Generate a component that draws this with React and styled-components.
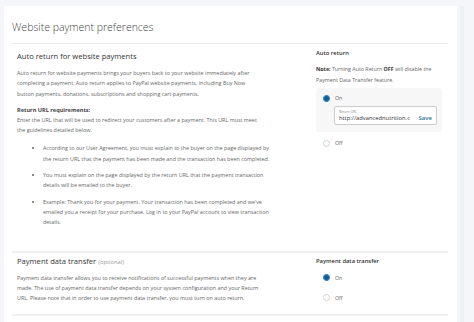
import React from 'react';
import styled, { createGlobalStyle } from 'styled-components';

const Global = createGlobalStyle`
  html, body {
    margin: 0;
    padding: 0;
    background: #f5f6f9;
    font-family: "Open Sans", "Noto Sans", sans-serif;
    color: #555;
  }
`;

const Page = styled.div`
  display: flex;
  height: 322px;
  padding: 6px 0 0 4px;
  box-sizing: border-box;
  overflow: hidden;
`;

const Card = styled.div`
  width: 453px;
  background: #fff;
  padding: 14px 9px 0 8px;
  box-sizing: border-box;
  flex-shrink: 0;
`;

const Rail = styled.div`
  width: 4px;
  margin-left: 3px;
  background: #eef0f4;
`;

const Title = styled.h1`
  margin: 0;
  font-size: 10.5px;
  font-weight: 300;
  color: #444;
  padding-bottom: 9px;
  border-bottom: 1px solid #ebebeb;
`;

const Section = styled.section`
  display: grid;
  grid-template-columns: 245px 1fr;
  column-gap: 54px;
  padding: ${p => p.pad || '10px 5px 14px'};
  border-bottom: 2px solid #f0f0f0;
`;

const Heading = styled.h2`
  margin: 0 0 7px;
  font-size: 7.6px;
  font-weight: 500;
  color: #333;
`;

const Optional = styled.span`
  font-size: 5.8px;
  font-weight: 400;
  color: #999;
`;

const Text = styled.p`
  margin: 0 0 ${p => p.mb ?? 7}px;
  font-size: 5.4px;
  line-height: 10.3px;
  color: #666;
`;

const Bold = styled.p`
  margin: 0 0 1px;
  font-size: 5.6px;
  font-weight: 700;
  color: #444;
`;

const List = styled.ul`
  margin: 8px -10px 0 0;
  padding-left: 26px;
  font-size: 5.4px;
  line-height: 10.3px;
  color: #666;
  li { margin-bottom: 6px; }
`;

const Side = styled.div`
  margin-top: ${p => p.top || 0}px;
`;

const SideHeading = styled.h3`
  margin: 0 0 ${p => p.mb || 7}px;
  font-size: 5.8px;
  font-weight: 600;
  color: #333;
`;

const Note = styled.p`
  margin: 0 0 3px;
  font-size: 5.3px;
  line-height: 10.5px;
  color: #666;
`;

const Strong = styled.strong`
  color: #333;
  line-height: inherit;
`;

const OnBox = styled.div`
  background: #f7f7f7;
  border-radius: 3px;
  padding: 6px 5px 7px 6px;
  width: 126px;
  box-sizing: border-box;
`;

const RadioRow = styled.label`
  display: flex;
  align-items: center;
  gap: 5px;
  font-size: 5.3px;
  color: #666;
  margin: ${p => p.m || '0'};
  padding-left: ${p => p.pl || 0}px;
`;

const Dot = styled.span`
  width: 7px;
  height: 7px;
  border-radius: 50%;
  box-sizing: border-box;
  border: 1px solid ${p => (p.on ? '#0b5f9e' : '#cfcfcf')};
  background: ${p => (p.on ? 'radial-gradient(circle, #0b5f9e 0 2.2px, #fff 2.5px)' : '#fff')};
`;

const UrlField = styled.div`
  display: flex;
  align-items: flex-end;
  justify-content: space-between;
  margin: 4px 0 0 12px;
  background: #fff;
  border: 1px solid #ccc;
  border-radius: 2px;
  padding: 2px 4px 2px 4px;
`;

const UrlInner = styled.div`
  display: flex;
  flex-direction: column;
  overflow: hidden;
`;

const UrlLabel = styled.span`
  font-size: 3.4px;
  color: #888;
  line-height: 5px;
`;

const UrlValue = styled.span`
  font-size: 5.8px;
  color: #333;
  line-height: 8px;
  white-space: nowrap;
  width: 72px;
  overflow: hidden;
`;

const Save = styled.span`
  font-size: 6px;
  font-weight: 600;
  color: #1d6f9a;
  line-height: 8px;
`;

export default function App() {
  return (
    <>
      <Global />
      <Page>
        <Card>
          <Title>Website payment preferences</Title>
          <Section pad="7px 5px 17px">
            <div>
              <Heading>Auto return for website payments</Heading>
              <Text>
                Auto return for website payments brings your buyers back to your website immediately after
                completing a payment. Auto return applies to PayPal website payments, including Buy Now
                button payments, donations, subscriptions and shopping cart payments.
              </Text>
              <Bold>Return URL requirements:</Bold>
              <Text mb={0}>
                Enter the URL that will be used to redirect your customers after a payment. This URL must meet
                the guidelines detailed below.
              </Text>
              <List>
                <li>
                  According to our User Agreement, you must explain to the buyer on the page displayed by
                  the return URL that the payment has been made and the transaction has been completed.
                </li>
                <li>
                  You must explain on the page displayed by the return URL that the payment transaction
                  details will be emailed to the buyer.
                </li>
                <li>
                  Example: Thank you for your payment. Your transaction has been completed and we've
                  emailed you a receipt for your purchase. Log in to your PayPal account to view transaction
                  details.
                </li>
              </List>
            </div>
            <Side top={-2}>
              <SideHeading>Auto return</SideHeading>
              <Note>
                <Strong>Note:</Strong> Turning Auto Return <Strong>OFF</Strong> will disable the Payment Data
                Transfer feature.
              </Note>
              <OnBox>
                <RadioRow pl={1}>
                  <Dot on /> On
                </RadioRow>
                <UrlField>
                  <UrlInner>
                    <UrlLabel>Return URL</UrlLabel>
                    <UrlValue>http://advancednutrition.c</UrlValue>
                  </UrlInner>
                  <Save>Save</Save>
                </UrlField>
              </OnBox>
              <RadioRow pl={7} m="7px 0 0">
                <Dot /> Off
              </RadioRow>
            </Side>
          </Section>
          <Section pad="3px 5px 11px">
            <div>
              <Heading>
                Payment data transfer <Optional>(optional)</Optional>
              </Heading>
              <Text mb={0}>
                Payment data transfer allows you to receive notifications of successful payments when they are
                made. The use of payment data transfer depends on your system configuration and your Return
                URL. Please note that in order to use payment data transfer, you must turn on auto return.
              </Text>
            </div>
            <Side top={1}>
              <SideHeading mb={9}>Payment data transfer</SideHeading>
              <RadioRow pl={7}>
                <Dot on /> On
              </RadioRow>
              <RadioRow pl={7} m="12px 0 0">
                <Dot /> Off
              </RadioRow>
            </Side>
          </Section>
        </Card>
        <Rail />
      </Page>
    </>
  );
}
